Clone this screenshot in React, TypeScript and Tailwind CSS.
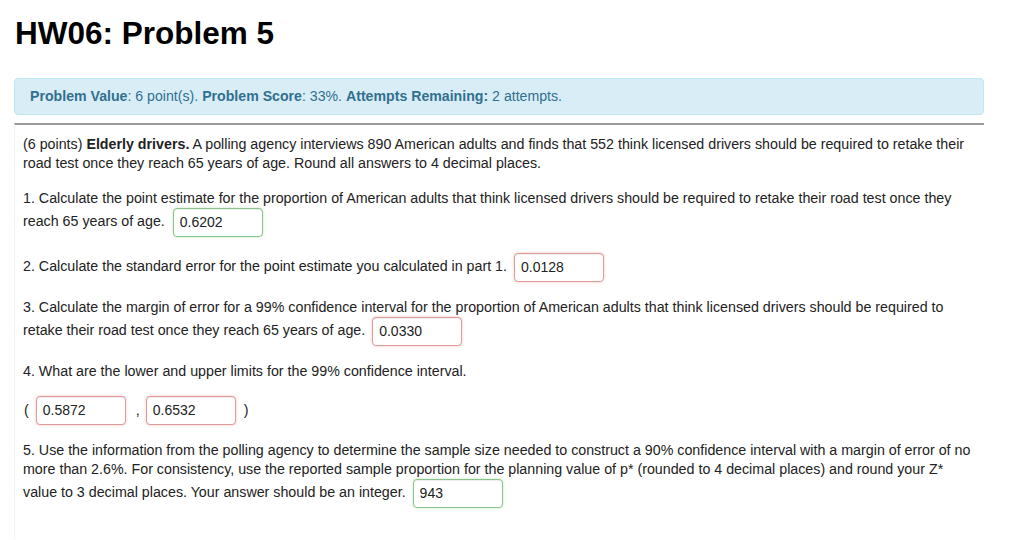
import React from 'react';

type Status = 'ok' | 'bad';

const Answer: React.FC<{ value: string; status: Status }> = ({ value, status }) => (
  <span
    className={
      'inline-flex items-center align-middle h-[29px] w-[90px] px-[6px] rounded-[4px] border bg-white text-[14px] text-[#222] ' +
      (status === 'ok'
        ? 'border-[#8cc48c] shadow-[inset_0_1px_1px_rgba(0,0,0,0.075),0_0_3px_rgba(92,184,92,0.35)]'
        : 'border-[#e09a9a] shadow-[inset_0_1px_1px_rgba(0,0,0,0.075),0_0_3px_rgba(217,83,79,0.35)]')
    }
  >
    {value}
  </span>
);

export default function App() {
  return (
    <div className="h-[540px] overflow-hidden bg-white font-['Liberation_Sans',Arial,sans-serif] text-[#222]">
      <div className="ml-[14px] w-[970px]">
        <h1 className="pt-[15px] pl-px text-[31.5px] leading-[36px] font-bold text-black">HW06: Problem 5</h1>

        <div className="mt-[27px] h-[37px] flex items-center px-[15px] rounded-[4px] border border-[#bce8f1] bg-[#d9edf7] text-[14.15px] text-[#31708f]">
          <span>
            <b>Problem Value</b>: 6 point(s). <b>Problem Score</b>: 33%. <b>Attempts Remaining:</b> 2 attempts.
          </span>
        </div>

        <div className="mt-[8px] border-t-2 border-[#9a9a9a] border-l border-l-[#f2f2f2] pl-[8px] pr-[4px] pt-[10px] pb-[31px] text-[14.25px] leading-[19px]">
          <p>
            (6 points) <b>Elderly drivers.</b> A polling agency interviews 890 American adults and finds that 552 think licensed drivers should be required to retake their road test once they reach 65 years of age. Round all answers to 4 decimal places.
          </p>

          <p className="mt-[16px]">
            1. Calculate the point estimate for the proportion of American adults that think licensed drivers should be required to retake their road test once they reach 65 years of age.{' '}
            <span className="ml-[4px]"><Answer value="0.6202" status="ok" /></span>
          </p>

          <p className="mt-[16px]">
            2. Calculate the standard error for the point estimate you calculated in part 1.{' '}
            <span className="ml-[3px]"><Answer value="0.0128" status="bad" /></span>
          </p>

          <p className="mt-[16px]">
            3. Calculate the margin of error for a 99% confidence interval for the proportion of American adults that think licensed drivers should be required to retake their road test once they reach 65 years of age.{' '}
            <span className="ml-[3px]"><Answer value="0.0330" status="bad" /></span>
          </p>

          <p className="mt-[16px]">4. What are the lower and upper limits for the 99% confidence interval.</p>

          <div className="mt-[15px] flex items-center h-[29px]">
            <span className="ml-px">(</span>
            <span className="ml-[7px]"><Answer value="0.5872" status="bad" /></span>
            <span className="ml-[10px]">,</span>
            <span className="ml-[6px]"><Answer value="0.6532" status="bad" /></span>
            <span className="ml-[8px]">)</span>
          </div>

          <p className="mt-[16px]">
            5. Use the information from the polling agency to determine the sample size needed to construct a 90% confidence interval with a margin of error of no more than 2.6%. For consistency, use the reported sample proportion for the planning value of p* (rounded to 4 decimal places) and round your Z* value to 3 decimal places. Your answer should be an integer.{' '}
            <span className="ml-[3px]"><Answer value="943" status="ok" /></span>
          </p>
        </div>
      </div>
    </div>
  );
}
